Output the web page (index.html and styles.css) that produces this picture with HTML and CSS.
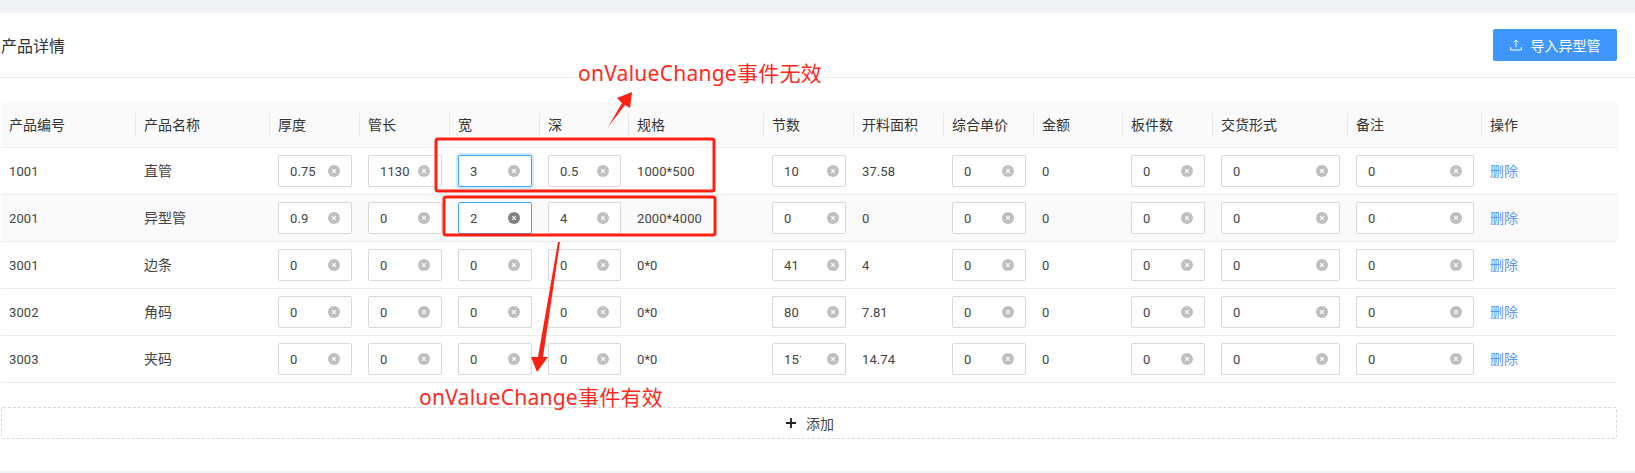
FILE: index.html
```html
<!DOCTYPE html>
<html lang="zh-CN">
<head>
    <meta charset="UTF-8">
    <title>产品详情</title>
    <link rel="stylesheet" href="styles.css">
</head>
<body>
    <svg class="defs" width="0" height="0">
        <symbol id="clear" viewBox="0 0 12 12">
            <circle cx="6" cy="6" r="6" fill="currentColor"/>
            <path d="M4.2 4.2l3.6 3.6M7.8 4.2L4.2 7.8" stroke="#fff" stroke-width="1.1" fill="none"/>
        </symbol>
    </svg>

    <div class="page">
        <div class="top-band"></div>

        <div class="card-head">
            <span class="card-title">产品详情</span>
            <button class="btn-primary">
                <svg class="btn-icon" viewBox="0 0 12 12" width="12" height="12">
                    <path d="M6 1v7M3.6 3.3L6 1l2.4 2.3M.7 8v3h10.6V8" stroke="#fff" stroke-width="1" fill="none"/>
                </svg>
                导入异型管
            </button>
        </div>

        <div class="card-body">
            <table class="product-table">
                <colgroup>
                    <col class="col-wide"><col class="col-wide">
                    <col class="col-small"><col class="col-small"><col class="col-small"><col class="col-narrow">
                    <col class="col-wider">
                    <col class="col-small"><col class="col-small"><col class="col-small"><col class="col-narrow"><col class="col-small">
                    <col class="col-wider"><col class="col-wide">
                    <col class="col-last">
                </colgroup>
                <thead>
                    <tr>
                        <th>产品编号</th><th>产品名称</th><th>厚度</th><th>管长</th><th>宽</th><th>深</th><th>规格</th><th>节数</th><th>开料面积</th><th>综合单价</th><th>金额</th><th>板件数</th><th>交货形式</th><th>备注</th><th>操作</th>
                    </tr>
                </thead>
                <tbody>
                    <tr>
                        <td>1001</td><td class="name">直管</td>
                        <td><span class="num-input"><input value="0.75" readonly><svg class="clear"><use href="#clear"/></svg></span></td>
                        <td><span class="num-input"><input value="1130" readonly><svg class="clear"><use href="#clear"/></svg></span></td>
                        <td><span class="num-input is-focus"><input value="3" readonly><svg class="clear"><use href="#clear"/></svg></span></td>
                        <td><span class="num-input"><input value="0.5" readonly><svg class="clear"><use href="#clear"/></svg></span></td>
                        <td>1000*500</td>
                        <td><span class="num-input count"><input value="10" readonly><svg class="clear"><use href="#clear"/></svg></span></td>
                        <td>37.58</td>
                        <td><span class="num-input"><input value="0" readonly><svg class="clear"><use href="#clear"/></svg></span></td>
                        <td>0</td>
                        <td><span class="num-input"><input value="0" readonly><svg class="clear"><use href="#clear"/></svg></span></td>
                        <td><span class="num-input"><input value="0" readonly><svg class="clear"><use href="#clear"/></svg></span></td>
                        <td><span class="num-input"><input value="0" readonly><svg class="clear"><use href="#clear"/></svg></span></td>
                        <td class="action"><a class="del-link">删除</a></td>
                    </tr>
                    <tr class="row-hover">
                        <td>2001</td><td class="name">异型管</td>
                        <td><span class="num-input"><input value="0.9" readonly><svg class="clear"><use href="#clear"/></svg></span></td>
                        <td><span class="num-input"><input value="0" readonly><svg class="clear"><use href="#clear"/></svg></span></td>
                        <td><span class="num-input is-hover"><input value="2" readonly><svg class="clear"><use href="#clear"/></svg></span></td>
                        <td><span class="num-input"><input value="4" readonly><svg class="clear"><use href="#clear"/></svg></span></td>
                        <td>2000*4000</td>
                        <td><span class="num-input count"><input value="0" readonly><svg class="clear"><use href="#clear"/></svg></span></td>
                        <td>0</td>
                        <td><span class="num-input"><input value="0" readonly><svg class="clear"><use href="#clear"/></svg></span></td>
                        <td>0</td>
                        <td><span class="num-input"><input value="0" readonly><svg class="clear"><use href="#clear"/></svg></span></td>
                        <td><span class="num-input"><input value="0" readonly><svg class="clear"><use href="#clear"/></svg></span></td>
                        <td><span class="num-input"><input value="0" readonly><svg class="clear"><use href="#clear"/></svg></span></td>
                        <td class="action"><a class="del-link">删除</a></td>
                    </tr>
                    <tr>
                        <td>3001</td><td class="name">边条</td>
                        <td><span class="num-input"><input value="0" readonly><svg class="clear"><use href="#clear"/></svg></span></td>
                        <td><span class="num-input"><input value="0" readonly><svg class="clear"><use href="#clear"/></svg></span></td>
                        <td><span class="num-input"><input value="0" readonly><svg class="clear"><use href="#clear"/></svg></span></td>
                        <td><span class="num-input"><input value="0" readonly><svg class="clear"><use href="#clear"/></svg></span></td>
                        <td>0*0</td>
                        <td><span class="num-input count"><input value="41" readonly><svg class="clear"><use href="#clear"/></svg></span></td>
                        <td>4</td>
                        <td><span class="num-input"><input value="0" readonly><svg class="clear"><use href="#clear"/></svg></span></td>
                        <td>0</td>
                        <td><span class="num-input"><input value="0" readonly><svg class="clear"><use href="#clear"/></svg></span></td>
                        <td><span class="num-input"><input value="0" readonly><svg class="clear"><use href="#clear"/></svg></span></td>
                        <td><span class="num-input"><input value="0" readonly><svg class="clear"><use href="#clear"/></svg></span></td>
                        <td class="action"><a class="del-link">删除</a></td>
                    </tr>
                    <tr>
                        <td>3002</td><td class="name">角码</td>
                        <td><span class="num-input"><input value="0" readonly><svg class="clear"><use href="#clear"/></svg></span></td>
                        <td><span class="num-input"><input value="0" readonly><svg class="clear"><use href="#clear"/></svg></span></td>
                        <td><span class="num-input"><input value="0" readonly><svg class="clear"><use href="#clear"/></svg></span></td>
                        <td><span class="num-input"><input value="0" readonly><svg class="clear"><use href="#clear"/></svg></span></td>
                        <td>0*0</td>
                        <td><span class="num-input count"><input value="80" readonly><svg class="clear"><use href="#clear"/></svg></span></td>
                        <td>7.81</td>
                        <td><span class="num-input"><input value="0" readonly><svg class="clear"><use href="#clear"/></svg></span></td>
                        <td>0</td>
                        <td><span class="num-input"><input value="0" readonly><svg class="clear"><use href="#clear"/></svg></span></td>
                        <td><span class="num-input"><input value="0" readonly><svg class="clear"><use href="#clear"/></svg></span></td>
                        <td><span class="num-input"><input value="0" readonly><svg class="clear"><use href="#clear"/></svg></span></td>
                        <td class="action"><a class="del-link">删除</a></td>
                    </tr>
                    <tr>
                        <td>3003</td><td class="name">夹码</td>
                        <td><span class="num-input"><input value="0" readonly><svg class="clear"><use href="#clear"/></svg></span></td>
                        <td><span class="num-input"><input value="0" readonly><svg class="clear"><use href="#clear"/></svg></span></td>
                        <td><span class="num-input"><input value="0" readonly><svg class="clear"><use href="#clear"/></svg></span></td>
                        <td><span class="num-input"><input value="0" readonly><svg class="clear"><use href="#clear"/></svg></span></td>
                        <td>0*0</td>
                        <td><span class="num-input count"><input value="151" readonly><svg class="clear"><use href="#clear"/></svg></span></td>
                        <td>14.74</td>
                        <td><span class="num-input"><input value="0" readonly><svg class="clear"><use href="#clear"/></svg></span></td>
                        <td>0</td>
                        <td><span class="num-input"><input value="0" readonly><svg class="clear"><use href="#clear"/></svg></span></td>
                        <td><span class="num-input"><input value="0" readonly><svg class="clear"><use href="#clear"/></svg></span></td>
                        <td><span class="num-input"><input value="0" readonly><svg class="clear"><use href="#clear"/></svg></span></td>
                        <td class="action"><a class="del-link">删除</a></td>
                    </tr>
                </tbody>
            </table>

            <button class="btn-add">
                <svg viewBox="0 0 10 10" width="10" height="10">
                    <path d="M5 0v10M0 5h10" stroke="#222" stroke-width="1.8" fill="none"/>
                </svg>
                添加
            </button>
        </div>

        <div class="bottom-band"></div>

        <!-- red notes drawn over the screenshot -->
        <svg class="marks" viewBox="0 0 1635 473" width="1635" height="473">
            <rect class="mark-box" x="436" y="139" width="278" height="52" rx="2"/>
            <rect class="mark-box" x="444" y="197" width="271" height="38" rx="2"/>
            <polygon class="mark-arrow" points="608,127 622,103 617,98 632,92 630,108 625,105"/>
            <polygon class="mark-arrow" points="558,242 560,242 543,357 548,357 537,372 531,357 538,357"/>
        </svg>
        <div class="note note-top">onValueChange事件无效</div>
        <div class="note note-bottom">onValueChange事件有效</div>
    </div>
</body>
</html>
```

FILE: styles.css
```css
* {
    box-sizing: border-box;
}
body {
    margin: 0;
    font-family: Roboto, "Noto Sans CJK SC", sans-serif;
    font-size: 13px;
    letter-spacing: 0.1px;
    color: #444;
    background-color: #fff;
}
.defs {
    position: absolute;
}
.page {
    position: relative;
    width: 1635px;
    height: 473px;
    overflow: hidden;
}
.top-band {
    height: 13px;
    background-color: #f0f2f5;
}
.card-head {
    display: flex;
    align-items: center;
    justify-content: space-between;
    height: 65px;
    padding: 0 18px 0 1px;
    border-bottom: 1px solid #ececec;
}
.card-title {
    font-size: 16px;
    letter-spacing: 0;
    color: #333;
}
.btn-primary {
    display: flex;
    align-items: center;
    justify-content: center;
    gap: 9px;
    width: 124px;
    height: 32px;
    padding: 0;
    border: none;
    border-radius: 2px;
    background-color: #4096ff;
    color: #fff;
    font: inherit;
    font-size: 14px;
}
.card-body {
    padding: 23px 18px 0 1px;
}
.product-table {
    width: 1616px;
    border-collapse: collapse;
    table-layout: fixed;
}
.col-wide {
    width: 134px;
}
.col-wider {
    width: 135px;
}
.col-small {
    width: 90px;
}
.col-narrow {
    width: 89px;
}
.col-last {
    width: 136px;
}
.product-table th {
    position: relative;
    height: 46px;
    padding: 0 7px 0 9px;
    background-color: #fafafa;
    border-bottom: 1px solid #ececec;
    font-size: 14px;
    font-weight: normal;
    letter-spacing: 0;
    text-align: left;
    color: #333;
}
.product-table th:first-child {
    padding-left: 8px;
}
.product-table th + th::before {
    content: "";
    position: absolute;
    left: 0;
    top: 12px;
    height: 23px;
    border-left: 1px solid #e8e8e8;
}
.product-table td {
    height: 47px;
    padding: 2px 7px 0 9px;
    border-bottom: 1px solid #ececec;
}
.product-table td:first-child {
    padding-left: 8px;
}
.product-table td.name,
.product-table td.action {
    padding-top: 0;
    padding-bottom: 2px;
    font-size: 14px;
    letter-spacing: 0;
}
.row-hover td {
    background-color: #fafafa;
}
.num-input {
    display: flex;
    align-items: center;
    height: 32px;
    margin-top: -2px;
    padding: 0 11px;
    border: 1px solid #d9d9d9;
    border-radius: 2px;
    background-color: #fff;
    color: #bfbfbf;
}
.num-input input {
    flex: 1;
    width: 30px;
    min-width: 0;
    padding: 2px 0 0;
    border: none;
    outline: none;
    background: none;
    font: inherit;
    letter-spacing: 0.1px;
    color: #444;
}
.clear {
    flex: none;
    width: 12px;
    height: 12px;
    margin-left: 3px;
}
.num-input.count input {
    flex: none;
    width: 17px;
    margin-right: 26px;
}
.num-input.count .clear {
    margin-left: 0;
}
.is-focus {
    border-color: #40a9ff;
    box-shadow: 0 0 0 2px rgba(24, 144, 255, 0.2);
}
.is-hover {
    border-color: #40a9ff;
    color: #808080;
}
.del-link {
    color: #5c94fb;
}
.btn-add {
    display: flex;
    align-items: center;
    justify-content: center;
    gap: 10px;
    width: 1616px;
    height: 32px;
    margin-top: 24px;
    padding: 0 0 0 2px;
    border: 1px dashed #d9d9d9;
    border-radius: 2px;
    background-color: #fff;
    color: #444;
    font: inherit;
    font-size: 14px;
}
.bottom-band {
    position: absolute;
    left: 0;
    right: 0;
    top: 471px;
    height: 2px;
    background-color: #f0f2f5;
}
.marks {
    position: absolute;
    left: 0;
    top: 0;
}
.mark-box {
    fill: none;
    stroke: #ff2014;
    stroke-width: 3;
}
.mark-arrow {
    fill: #ff2014;
}
.note {
    position: absolute;
    font-family: "Noto Sans", "Noto Sans CJK SC", sans-serif;
    color: #ff2a1f;
    font-size: 21px;
    letter-spacing: 0.25px;
    line-height: 30px;
    white-space: nowrap;
}
.note-top {
    left: 578px;
    top: 58px;
}
.note-bottom {
    left: 419px;
    top: 382px;
}
```
